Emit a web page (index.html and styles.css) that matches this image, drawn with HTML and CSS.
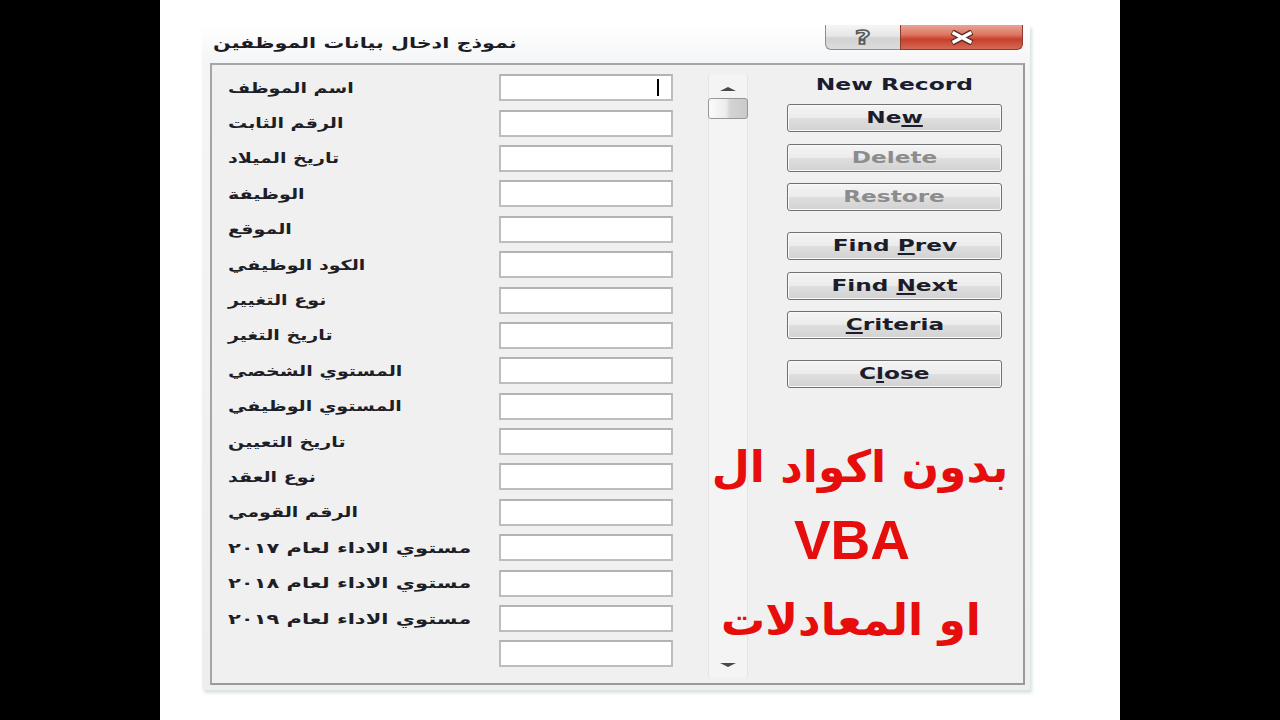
FILE: index.html
```html
<!DOCTYPE html>
<html lang="ar">
<head>
<meta charset="utf-8">
<title>نموذج ادخال بيانات الموظفين</title>
<link rel="stylesheet" href="styles.css">
</head>
<body>
<div class="screen">
  <div class="bar"></div>
  <div class="stage">
    <div class="dialog">
      <div class="titlebar">
        <span class="title" dir="rtl">نموذج ادخال بيانات الموظفين</span>
        <div class="caption-btns">
          <div class="help"><span>?</span></div>
          <div class="close">
            <svg width="32" height="15" viewBox="0 0 32 15">
              <path d="M6 2 L26 13 M26 2 L6 13" stroke="#5b2b24" stroke-width="6" fill="none"/>
              <path d="M6.6 2.4 L25.4 12.6 M25.4 2.4 L6.6 12.6" stroke="#ffffff" stroke-width="3.4" fill="none"/>
            </svg>
          </div>
        </div>
      </div>
      <div class="client">
        <div class="fields">
          <div class="row"><div class="label"><span dir="rtl">اسم الموظف</span></div><div class="field focused"><i class="caret"></i></div></div>
          <div class="row"><div class="label"><span dir="rtl">الرقم الثابت</span></div><div class="field"></div></div>
          <div class="row"><div class="label"><span dir="rtl">تاريخ الميلاد</span></div><div class="field"></div></div>
          <div class="row"><div class="label"><span dir="rtl">الوظيفة</span></div><div class="field"></div></div>
          <div class="row"><div class="label"><span dir="rtl">الموقع</span></div><div class="field"></div></div>
          <div class="row"><div class="label"><span dir="rtl">الكود الوظيفي</span></div><div class="field"></div></div>
          <div class="row"><div class="label"><span dir="rtl">نوع التغيير</span></div><div class="field"></div></div>
          <div class="row"><div class="label"><span dir="rtl">تاريخ التغير</span></div><div class="field"></div></div>
          <div class="row"><div class="label"><span dir="rtl">المستوي الشخصي</span></div><div class="field"></div></div>
          <div class="row"><div class="label"><span dir="rtl">المستوي الوظيفي</span></div><div class="field"></div></div>
          <div class="row"><div class="label"><span dir="rtl">تاريخ التعيين</span></div><div class="field"></div></div>
          <div class="row"><div class="label"><span dir="rtl">نوع العقد</span></div><div class="field"></div></div>
          <div class="row"><div class="label"><span dir="rtl">الرقم القومي</span></div><div class="field"></div></div>
          <div class="row"><div class="label"><span dir="rtl" class="long">مستوي الاداء لعام ٢٠١٧</span></div><div class="field"></div></div>
          <div class="row"><div class="label"><span dir="rtl" class="long">مستوي الاداء لعام ٢٠١٨</span></div><div class="field"></div></div>
          <div class="row"><div class="label"><span dir="rtl" class="long">مستوي الاداء لعام ٢٠١٩</span></div><div class="field"></div></div>
          <div class="row"><div class="label"></div><div class="field"></div></div>
        </div>
        <div class="scrollbar">
          <div class="sb-btn sb-up"><i class="arrow-up"></i></div>
          <div class="thumb"></div>
          <div class="sb-track"></div>
          <div class="sb-btn sb-down"><i class="arrow-down"></i></div>
        </div>
        <div class="actions">
          <div class="heading"><span>New Record</span></div>
          <div class="btn"><span>Ne<u>w</u></span></div>
          <div class="btn disabled"><span>Delete</span></div>
          <div class="btn disabled"><span>Restore</span></div>
          <div class="btn group"><span>Find <u>P</u>rev</span></div>
          <div class="btn"><span>Find <u>N</u>ext</span></div>
          <div class="btn"><span><u>C</u>riteria</span></div>
          <div class="btn group"><span>C<u>l</u>ose</span></div>
        </div>
      </div>
      <div class="promo">
        <div class="promo-line ar" dir="rtl">بدون اكواد ال</div>
        <div class="promo-line en shift">VBA</div>
        <div class="promo-line ar shift last" dir="rtl">او المعادلات</div>
      </div>
    </div>
  </div>
  <div class="bar"></div>
</div>
</body>
</html>
```

FILE: styles.css
```css
html, body {
  margin: 0;
  padding: 0;
}
body {
  background: #000;
  font-family: "DejaVu Sans", sans-serif;
}
.screen {
  display: flex;
  width: 1280px;
  height: 720px;
  overflow: hidden;
}
.bar {
  width: 160px;
  background: #000;
  flex: none;
}
.stage {
  width: 960px;
  flex: none;
  background: #fff;
  padding: 25px 0 0 42px;
  box-sizing: border-box;
}
.dialog {
  position: relative;
  width: 828px;
  height: 665px;
  box-sizing: border-box;
  padding: 0 5px 5px 8px;
  display: flex;
  flex-direction: column;
  background: linear-gradient(to bottom, #ffffff 0px, #f4f5f6 38px, #eceeef 100%);
  box-shadow: 2px 3px 3px rgba(150, 170, 170, 0.35);
}
.titlebar {
  height: 38px;
  flex: none;
  display: flex;
  justify-content: space-between;
  align-items: flex-start;
}
.title {
  display: inline-block;
  margin: 8px 0 0 3px;
  line-height: 20px;
  font-size: 15px;
  font-weight: bold;
  color: #1c1c24;
  transform: scaleX(1.38);
  transform-origin: left center;
}
.caption-btns {
  display: flex;
  margin-right: 2px;
  height: 25px;
}
.help {
  width: 75px;
  height: 25px;
  box-sizing: border-box;
  border: 1px solid #8d8d8d;
  border-top: none;
  border-right: none;
  border-radius: 0 0 0 6px;
  background: linear-gradient(to bottom, #f6f6f6 0%, #e6e6e6 45%, #d2d2d2 55%, #dcdcdc 100%);
  display: flex;
  align-items: center;
  justify-content: center;
}
.help span {
  display: inline-block;
  font-size: 20px;
  font-weight: bold;
  line-height: 20px;
  color: #eeeeee;
  -webkit-text-stroke: 1.5px #5a5a5a;
  transform: scaleX(1.35);
}
.close {
  width: 123px;
  height: 25px;
  box-sizing: border-box;
  border: 1px solid #8e3b2f;
  border-top: none;
  border-radius: 0 0 6px 0;
  background: linear-gradient(to bottom, #e9a394 0%, #dc7762 40%, #c83f2b 60%, #d46a55 100%);
  display: flex;
  align-items: center;
  justify-content: center;
}
.close svg {
  display: block;
}
.client {
  flex: 1;
  display: flex;
  border: 2px solid #a5a5a5;
  border-right-color: #9a9a9a;
  border-bottom-color: #9a9a9a;
  background: #f0f0f0;
  padding: 5px 0 0 16px;
  box-sizing: border-box;
}
.fields {
  width: 445px;
  flex: none;
}
.row {
  display: flex;
  align-items: center;
  height: 35.4px;
}
.label {
  width: 271px;
  flex: none;
  height: 27px;
  display: flex;
  align-items: center;
}
.label span {
  display: inline-block;
  font-size: 14px;
  font-weight: bold;
  color: #1e1e26;
  white-space: nowrap;
  transform: scaleX(1.36);
  transform-origin: left center;
}
.label span.long {
  transform: scaleX(1.5);
}
.field {
  width: 174px;
  height: 27px;
  box-sizing: border-box;
  border: 2px solid #bdbdbd;
  border-top-color: #b3b3b3;
  background: #fff;
  display: flex;
  align-items: center;
  justify-content: flex-end;
  padding-right: 12px;
}
.caret {
  display: block;
  width: 2px;
  height: 17px;
  background: #000;
}
.scrollbar {
  width: 40px;
  flex: none;
  margin: 5px 0 6px 35px;
  display: flex;
  flex-direction: column;
  background: #f4f4f4;
  border-left: 1px solid #e4e4e4;
  border-right: 1px solid #e4e4e4;
  box-sizing: border-box;
}
.sb-btn {
  height: 23px;
  flex: none;
  display: flex;
  align-items: center;
  justify-content: center;
}
.sb-down {
  height: 24px;
}
.arrow-up, .arrow-down {
  display: block;
  width: 0;
  height: 0;
  border-left: 8px solid transparent;
  border-right: 8px solid transparent;
}
.arrow-up {
  border-bottom: 4px solid #4a4a4a;
  margin-top: 4px;
}
.arrow-down {
  border-top: 4px solid #4a4a4a;
}
.thumb {
  height: 21px;
  flex: none;
  margin: 0 -1px;
  box-sizing: border-box;
  border: 1px solid #979797;
  border-radius: 3px;
  background: linear-gradient(to right, #fbfbfb 0%, #ececec 45%, #d4d4d4 55%, #c9c9c9 100%);
}
.sb-track {
  flex: 1;
}
.actions {
  width: 215px;
  flex: none;
  margin-left: 39px;
  display: flex;
  flex-direction: column;
  align-items: stretch;
}
.heading {
  height: 20px;
  margin-top: 5px;
  text-align: center;
  line-height: 20px;
}
.heading span {
  display: inline-block;
  font-size: 15px;
  font-weight: bold;
  color: #1c1c30;
  transform: scaleX(1.56);
}
.btn {
  height: 28px;
  margin-top: 11.5px;
  box-sizing: border-box;
  border: 1px solid #707070;
  border-radius: 3px;
  background: linear-gradient(to bottom, #f4f4f4 0%, #ececec 48%, #dedede 52%, #d2d2d2 100%);
  box-shadow: inset 0 0 0 1px #fafafa;
  display: flex;
  align-items: center;
  justify-content: center;
}
.actions .heading + .btn {
  margin-top: 9px;
}
.btn.group {
  margin-top: 21px;
}
.btn span {
  display: inline-block;
  font-size: 16px;
  font-weight: bold;
  line-height: 20px;
  color: #1c1c2a;
  transform: scaleX(1.45);
}
.btn u {
  text-decoration-thickness: 1.5px;
  text-underline-offset: 2px;
}
.btn.disabled span {
  color: #8c8c8c;
}
.promo {
  position: absolute;
  left: 500px;
  top: 405px;
  width: 316px;
  text-align: center;
  color: #e60d0d;
}
.promo-line {
  white-space: nowrap;
}
.promo-line.shift {
  padding-right: 16px;
}
.promo-line.last {
  margin-top: 7px;
  padding-right: 18px;
}
.promo-line.ar {
  font-family: "DejaVu Sans", sans-serif;
  font-weight: bold;
  font-size: 44px;
  line-height: 74px;
}
.promo-line.en {
  font-family: "Liberation Sans", Arial, sans-serif;
  font-weight: bold;
  font-size: 55px;
  line-height: 72px;
}
```
